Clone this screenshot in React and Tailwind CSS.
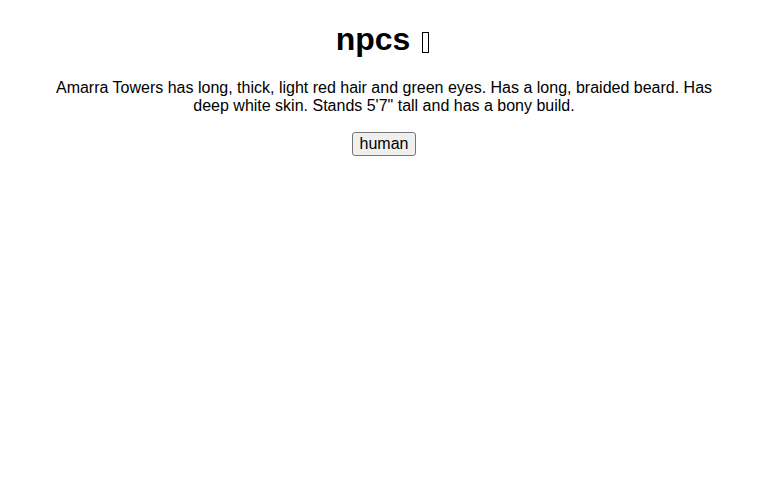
export default function App() {
  return (
    <div className="min-h-[480px] bg-white text-center text-black" style={{ fontFamily: '"Liberation Sans", Arial, sans-serif' }}>
      <h1 className="pt-[21px] text-[32px] font-bold leading-[37px]">
        npcs{" "}
        <span className="relative top-[1px] mx-[3px] inline-block h-[21px] w-[7px] border-[1.5px] border-black align-[-2px]" aria-hidden="true"></span>
      </h1>
      <p className="mx-auto mt-[21px] max-w-[680px] text-base leading-[18px]">
        Amarra Towers has long, thick, light red hair and green eyes. Has a long, braided beard. Has deep white skin. Stands 5'7" tall and has a bony build.
      </p>
      <button className="mt-[17px] h-[24px] rounded-[3px] border border-[#767676] bg-[#efefef] px-[7px] text-base leading-[18px] text-black">
        human
      </button>
    </div>
  );
}
